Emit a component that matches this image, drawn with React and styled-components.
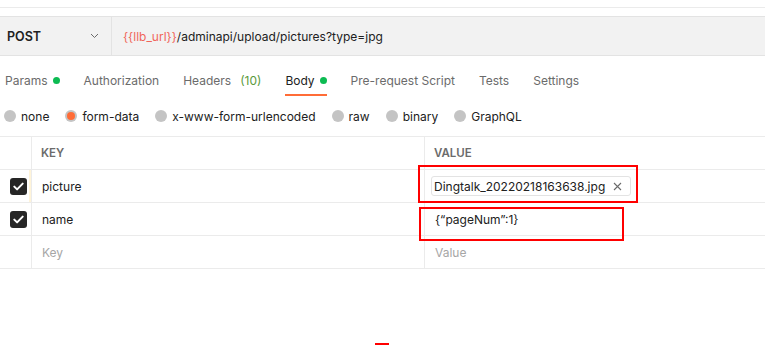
import React from "react";
import styled, { createGlobalStyle } from "styled-components";

const Global = createGlobalStyle`
  html, body { margin: 0; padding: 0; background: #fff; }
  body { font-family: Inter, "Noto Sans", "Liberation Sans", sans-serif; color: #212121; }
  * { box-sizing: border-box; }
`;

const Page = styled.div`
  position: relative;
  width: 765px;
  height: 345px;
  overflow: hidden;
  background: #fff;
`;

const TopStrip = styled.div`
  height: 8px;
  border-bottom: 1px solid #ebebeb;
`;

const UrlBar = styled.div`
  margin-top: 8px;
  height: 40px;
  display: flex;
  background: #f2f2f2;
  border-top: 1px solid #e3e3e3;
  border-bottom: 1px solid #e3e3e3;
`;

const Method = styled.div`
  width: 112px;
  display: flex;
  align-items: center;
  justify-content: space-between;
  padding: 0 12px 0 7px;
  border-right: 1px solid #e3e3e3;
  font-weight: 600;
  font-size: 12.5px;
  color: #212121;
`;

const Url = styled.div`
  display: flex;
  align-items: center;
  padding-left: 11px;
  font-size: 12px;
  color: #212121;
`;

const Var = styled.span`
  color: #f0665a;
`;

const Tabs = styled.div`
  margin-top: 10px;
  display: flex;
  height: 30px;
  padding-left: 5px;
  gap: 24px;
`;

const Tab = styled.div`
  display: flex;
  align-items: center;
  gap: 5px;
  font-size: 12px;
  color: ${(p) => (p.$active ? "#212121" : "#6b6b6b")};
  border-bottom: 2px solid ${(p) => (p.$active ? "#ff6c37" : "transparent")};
  height: 30px;
`;

const Count = styled.span`
  color: #5b9a3c;
  margin-left: 4px;
`;

const Dot = styled.span`
  width: 7px;
  height: 7px;
  border-radius: 50%;
  background: #0cbb52;
  display: inline-block;
`;

const Radios = styled.div`
  height: 40px;
  display: flex;
  align-items: center;
  padding-left: 4px;
  gap: 16px;
`;

const RadioItem = styled.label`
  display: flex;
  align-items: center;
  gap: 5px;
  font-size: 12px;
  color: #212121;
`;

const Circle = styled.span`
  width: 12px;
  height: 12px;
  border-radius: 50%;
  background: #c4c4c4;
  display: flex;
  align-items: center;
  justify-content: center;
  &::after {
    content: "";
    display: ${(p) => (p.$on ? "block" : "none")};
    width: 8px;
    height: 8px;
    border-radius: 50%;
    background: #ff6c37;
  }
`;

const TableWrap = styled.div`
  position: relative;
`;

const Table = styled.div`
  display: grid;
  grid-template-columns: 32px 393px 1fr;
  border-top: 1px solid #ebebeb;
`;

const Cell = styled.div`
  height: 33px;
  border-bottom: 1px solid #ebebeb;
  border-right: ${(p) => (p.$last ? "none" : "1px solid #ebebeb")};
  display: flex;
  align-items: center;
  padding-left: ${(p) => p.$pl || 0}px;
  font-size: 12px;
  color: ${(p) => (p.$muted ? "#a6a6a6" : "#212121")};
  box-shadow: ${(p) => (p.$hl ? "inset -2px 0 0 #fff4d9" : "none")};
`;

const Head = styled(Cell)`
  font-size: 11.5px;
  font-weight: 600;
  color: #6b6b6b;
`;

const Check = styled.span`
  width: 17px;
  height: 17px;
  border-radius: 3px;
  background: #262626;
  display: flex;
  align-items: center;
  justify-content: center;
`;

const Chip = styled.div`
  display: flex;
  align-items: center;
  justify-content: space-between;
  width: 200px;
  height: 20px;
  border: 1px solid #e3e3e3;
  border-radius: 3px;
  padding: 0 8px 0 2px;
  font-size: 12px;
  color: #212121;
`;

const Annot = styled.div`
  position: absolute;
  border: 2px solid #f00;
  left: ${(p) => p.$x}px;
  top: ${(p) => p.$y}px;
  width: ${(p) => p.$w}px;
  height: ${(p) => p.$h}px;
`;

const RedDash = styled.div`
  position: absolute;
  left: 375px;
  top: 343px;
  width: 14px;
  height: 2px;
  background: #f00;
`;

const Chevron = () => (
  <svg width="9" height="6" viewBox="0 0 9 6">
    <path d="M1 1l3.5 3.5L8 1" fill="none" stroke="#6b6b6b" strokeWidth="1" />
  </svg>
);

const Tick = () => (
  <svg width="11" height="9" viewBox="0 0 11 9">
    <path d="M1.3 4.6l2.8 2.8L9.7 1.6" fill="none" stroke="#fff" strokeWidth="2" strokeLinecap="round" strokeLinejoin="round" />
  </svg>
);

const Cross = () => (
  <svg width="9" height="9" viewBox="0 0 9 9">
    <path d="M1 1l7 7M8 1l-7 7" stroke="#6b6b6b" strokeWidth="1.1" />
  </svg>
);

const radios = [
  ["none", false],
  ["form-data", true],
  ["x-www-form-urlencoded", false],
  ["raw", false],
  ["binary", false],
  ["GraphQL", false],
];

export default function App() {
  return (
    <Page>
      <Global />
      <TopStrip />
      <UrlBar>
        <Method>
          POST
          <Chevron />
        </Method>
        <Url>
          <Var>{"{{llb_url}}"}</Var>/adminapi/upload/pictures?type=jpg
        </Url>
      </UrlBar>
      <Tabs>
        <Tab>Params <Dot /></Tab>
        <Tab>Authorization</Tab>
        <Tab>Headers<Count>(10)</Count></Tab>
        <Tab $active>Body <Dot /></Tab>
        <Tab>Pre-request Script</Tab>
        <Tab>Tests</Tab>
        <Tab>Settings</Tab>
      </Tabs>
      <Radios>
        {radios.map(([l, on]) => (
          <RadioItem key={l}>
            <Circle $on={on} />
            {l}
          </RadioItem>
        ))}
      </Radios>
      <TableWrap>
        <Table>
          <Cell />
          <Head $pl={9}>KEY</Head>
          <Head $pl={9} $last>VALUE</Head>

          <Cell $pl={10} $hl><Check><Tick /></Check></Cell>
          <Cell $pl={10}>picture</Cell>
          <Cell $pl={6} $last>
            <Chip>
              Dingtalk_20220218163638.jpg
              <Cross />
            </Chip>
          </Cell>

          <Cell $pl={10}><Check><Tick /></Check></Cell>
          <Cell $pl={10}>name</Cell>
          <Cell $pl={10} $last>{"{“pageNum”:1}"}</Cell>

          <Cell />
          <Cell $pl={10} $muted>Key</Cell>
          <Cell $pl={10} $muted $last>Value</Cell>
        </Table>
        <Annot $x={418} $y={29} $w={220} $h={38} />
        <Annot $x={419} $y={71} $w={205} $h={34} />
      </TableWrap>
      <RedDash />
    </Page>
  );
}
